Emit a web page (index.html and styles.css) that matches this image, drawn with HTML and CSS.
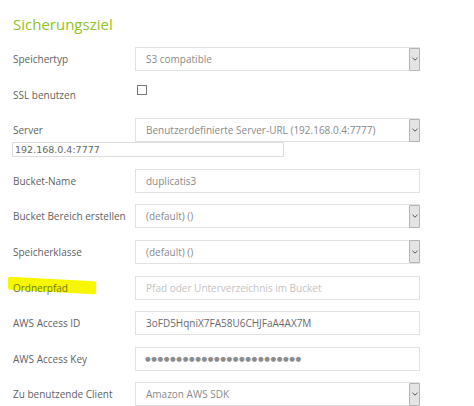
FILE: index.html
```html
<!DOCTYPE html>
<html lang="de">
<head>
<meta charset="utf-8">
<title>Sicherungsziel</title>
<link rel="stylesheet" href="styles.css">
</head>
<body>
<div class="page">
  <h2 class="title">Sicherungsziel</h2>
  <div class="form">
    <div class="row">
      <span class="lbl">Speichertyp</span>
      <div class="field select"><span class="val">S3 compatible</span><span class="arrow"><svg width="6" height="4" viewBox="0 0 6 4"><path d="M0.5 0.8 L3 3.2 L5.5 0.8" fill="none" stroke="#555" stroke-width="1"/></svg></span></div>
    </div>
    <div class="row row-check">
      <span class="lbl lbl-check">SSL benutzen</span>
      <span class="check"></span>
    </div>
    <div class="group">
      <div class="row">
        <span class="lbl">Server</span>
        <div class="field select"><span class="val">Benutzerdefinierte Server-URL (192.168.0.4:7777)</span><span class="arrow"><svg width="6" height="4" viewBox="0 0 6 4"><path d="M0.5 0.8 L3 3.2 L5.5 0.8" fill="none" stroke="#555" stroke-width="1"/></svg></span></div>
      </div>
      <div class="plain">192.168.0.4:7777</div>
    </div>
    <div class="row">
      <span class="lbl">Bucket-Name</span>
      <div class="field"><span class="val">duplicatis3</span></div>
    </div>
    <div class="row">
      <span class="lbl">Bucket Bereich erstellen</span>
      <div class="field select"><span class="val">(default) ()</span><span class="arrow"><svg width="6" height="4" viewBox="0 0 6 4"><path d="M0.5 0.8 L3 3.2 L5.5 0.8" fill="none" stroke="#555" stroke-width="1"/></svg></span></div>
    </div>
    <div class="row">
      <span class="lbl">Speicherklasse</span>
      <div class="field select"><span class="val">(default) ()</span><span class="arrow"><svg width="6" height="4" viewBox="0 0 6 4"><path d="M0.5 0.8 L3 3.2 L5.5 0.8" fill="none" stroke="#555" stroke-width="1"/></svg></span></div>
    </div>
    <div class="row">
      <span class="lbl lbl-hl">Ordnerpfad</span>
      <div class="field"><span class="val placeholder">Pfad oder Unterverzeichnis im Bucket</span></div>
    </div>
    <div class="row">
      <span class="lbl">AWS Access ID</span>
      <div class="field"><span class="val dark">3oFD5HqniX7FA58U6CHJFaA4AX7M</span></div>
    </div>
    <div class="row">
      <span class="lbl">AWS Access Key</span>
      <div class="field"><span class="val dots">●●●●●●●●●●●●●●●●●●●●●●●●●</span></div>
    </div>
    <div class="row">
      <span class="lbl">Zu benutzende Client</span>
      <div class="field select"><span class="val">Amazon AWS SDK</span><span class="arrow"><svg width="6" height="4" viewBox="0 0 6 4"><path d="M0.5 0.8 L3 3.2 L5.5 0.8" fill="none" stroke="#555" stroke-width="1"/></svg></span></div>
    </div>
  </div>
</div>
</body>
</html>
```

FILE: styles.css
```css
html, body {
  margin: 0;
  padding: 0;
  background: #ffffff;
}
.page {
  padding: 0 0 0 13px;
  font-family: "Open Sans", "DejaVu Sans", sans-serif;
  font-size: 10px;
  color: #616161;
}
.title {
  margin: 0;
  padding-top: 14px;
  height: 47px;
  box-sizing: border-box;
  font-size: 15px;
  font-weight: normal;
  line-height: 20px;
  color: #8fc31f;
}
.form {
  display: flex;
  flex-direction: column;
  gap: 11.6px;
}
.group {
  display: flex;
  flex-direction: column;
}
.row {
  display: flex;
  align-items: center;
  height: 24px;
}
.lbl {
  width: 122px;
  flex: none;
  position: relative;
  white-space: nowrap;
}
.lbl-hl {
  color: #6f7d10;
  z-index: 0;
}
.lbl-hl::before {
  content: "";
  position: absolute;
  left: -5px;
  top: -2px;
  width: 88px;
  height: 13px;
  background: #f7f700;
  transform: skewY(3deg);
  border-radius: 2px;
  z-index: -1;
}
.row-check {
  align-items: flex-start;
}
.lbl-check {
  line-height: 24px;
}
.check {
  margin: 2px 0 0 2px;
  width: 8px;
  height: 8px;
  border: 1px solid #777;
  background: #fff;
}
.field {
  box-sizing: border-box;
  width: 285px;
  height: 24px;
  border: 1px solid #e2e2e2;
  display: flex;
  align-items: center;
  padding-left: 10px;
  color: #8a8a8a;
}
.val {
  flex: 1;
  white-space: nowrap;
  overflow: hidden;
}
.placeholder {
  color: #c4c4c4;
}
.dark {
  color: #6a6a6a;
}
.dots {
  padding-left: 0;
  margin-left: -1px;
  color: #8c8c8c;
  font-family: "DejaVu Sans", sans-serif;
  font-size: 6.5px;
  letter-spacing: 0.6px;
}
.arrow {
  box-sizing: border-box;
  width: 11px;
  height: 23px;
  margin-right: -1px;
  background: #e4e4e4;
  border: 1px solid #b4b4b4;
  border-radius: 1px;
  display: flex;
  align-items: center;
  justify-content: center;
}
.plain {
  box-sizing: border-box;
  width: 272px;
  height: 15px;
  margin-left: -1px;
  border: 1px solid #dcdcdc;
  padding-left: 2px;
  font-family: "DejaVu Sans", sans-serif;
  font-size: 9.5px;
  line-height: 13px;
  color: #666;
}
```
